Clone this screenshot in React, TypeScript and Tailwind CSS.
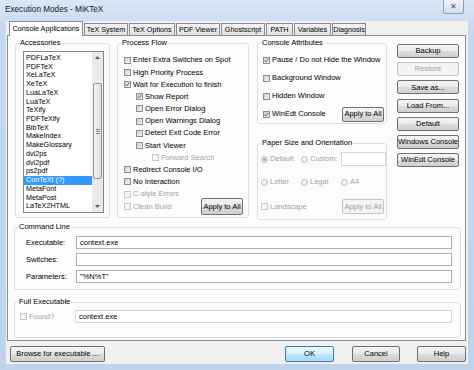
import clsx from 'clsx';

const accessories = [
  'PDFLaTeX',
  'PDFTeX',
  'XeLaTeX',
  'XeTeX',
  'LuaLaTeX',
  'LuaTeX',
  'TeXify',
  'PDFTeXify',
  'BibTeX',
  'MakeIndex',
  'MakeGlossary',
  'dvi2ps',
  'dvi2pdf',
  'ps2pdf',
  'ConTeXt (?)',
  'MetaFont',
  'MetaPost',
  'LaTeX2HTML',
  'TeX4ht',
];

const tabs = [
  { label: 'Console Applications', w: 'w-[74px]' },
  { label: 'TeX System', w: 'w-[44px]' },
  { label: 'TeX Options', w: 'w-[46px]' },
  { label: 'PDF Viewer', w: 'w-[44px]' },
  { label: 'Ghostscript', w: 'w-[44px]' },
  { label: 'PATH', w: 'w-[27px]' },
  { label: 'Variables', w: 'w-[37px]' },
  { label: 'Diagnosis', w: 'w-[34px]' },
];

const sideButtons = [
  { label: 'Backup' },
  { label: 'Restore', disabled: true },
  { label: 'Save as...' },
  { label: 'Load From...' },
  { label: 'Default' },
  { label: 'Windows Console' },
  { label: 'WinEdt Console' },
];

function Check({ checked, disabled }: { checked?: boolean; disabled?: boolean }) {
  return (
    <span
      className={clsx(
        'flex h-[7px] w-[7px] shrink-0 items-center justify-center border',
        disabled
          ? 'border-[#c8c8c8] bg-[#f6f6f6]'
          : 'border-[#8e8f8f] bg-[linear-gradient(135deg,#cfcfcf,#f4f4f4)]'
      )}
    >
      {checked && (
        <svg viewBox="0 0 8 8" className="h-[7px] w-[7px]">
          <path d="M1.3 4.2 L3.1 6.2 L6.8 1.3" stroke="#1f3a6a" strokeWidth="1.3" fill="none" />
        </svg>
      )}
    </span>
  );
}

function Radio({ selected }: { selected?: boolean }) {
  return (
    <span className="flex h-[7px] w-[7px] shrink-0 items-center justify-center rounded-full border border-[#b9b9b9] bg-[#f3f3f3]">
      {selected && <span className="h-[3px] w-[3px] rounded-full bg-[#a4a4a4]" />}
    </span>
  );
}

function CheckRow({
  label,
  checked,
  disabled,
  indent = '',
}: {
  label: string;
  checked?: boolean;
  disabled?: boolean;
  indent?: string;
}) {
  return (
    <div className={clsx('flex h-[12.2px] items-center gap-[2px] whitespace-nowrap', indent)}>
      <Check checked={checked} disabled={disabled} />
      <span className={disabled ? 'text-[#a3a3a3]' : 'text-black'}>{label}</span>
    </div>
  );
}

function Btn({
  label,
  disabled,
  className,
}: {
  label: string;
  disabled?: boolean;
  className?: string;
}) {
  return (
    <div
      className={clsx(
        'flex shrink-0 items-center justify-center whitespace-nowrap rounded-[2px] border text-[7.5px]',
        disabled
          ? 'border-[#c2c5c8] bg-[#f4f4f4] text-[#a0a0a0]'
          : 'border-[#707070] bg-[linear-gradient(#f3f3f3,#ebebeb_50%,#dcdcdc_50%,#cfcfcf)] text-black',
        className
      )}
    >
      {label}
    </div>
  );
}

function Group({
  title,
  className,
  children,
}: {
  title: string;
  className?: string;
  children: React.ReactNode;
}) {
  return (
    <fieldset className={clsx('shrink-0 rounded-[3px] border border-[#d5dfe5]', className)}>
      <legend className="ml-[3px] px-[1px] text-[7.5px] leading-[10px] text-black">{title}</legend>
      {children}
    </fieldset>
  );
}

function Field({ value, className }: { value?: string; className?: string }) {
  return (
    <div
      className={clsx(
        'flex h-[13px] items-center border border-[#abadb3] bg-white pl-[3px] text-[7.5px] text-black',
        className
      )}
    >
      {value}
    </div>
  );
}

export default function App() {
  return (
    <div className="flex h-[370px] w-[474px] flex-col bg-[linear-gradient(#d9e7f6,#c6d9ef_30px,#bfd3eb)] font-['Liberation_Sans',Arial,sans-serif] text-[7.5px] leading-none">
      {/* Title bar */}
      <div className="flex h-[21px] shrink-0 items-start">
        <span className="pl-[5px] pt-[6px] text-[8.2px] text-[#1a1a1a]">Execution Modes - MiKTeX</span>
        <div className="ml-auto mr-[10px] flex h-[14px] w-[21px] items-center justify-center rounded-b-[3px] border border-t-0 border-[#8d9fb6] bg-[linear-gradient(#eef3f9,#d3dfed)] text-[8px] text-[#4d5a6b]">
          ✕
        </div>
      </div>

      {/* Dialog body */}
      <div className="mx-[6px] flex h-[343px] w-[462px] flex-col bg-[#f0f0f0]">
        {/* Tabs */}
        <div className="flex h-[14px] shrink-0 items-end gap-[1px] pl-[3px]">
          {tabs.map((t, i) => (
            <div
              key={t.label}
              className={clsx(
                'flex items-center justify-center whitespace-nowrap border border-b-0 border-[#898c95] text-[7.2px] text-black',
                t.w,
                i === 0
                  ? 'relative z-10 -mb-[1px] h-[15px] bg-white'
                  : 'h-[12px] bg-[linear-gradient(#f3f3f3,#e2e2e2)]'
              )}
            >
              {t.label}
            </div>
          ))}
        </div>

        {/* Tab panel */}
        <div className="ml-[1px] h-[306px] w-[459px] shrink-0 border border-[#898c95] bg-[#fcfcfc]">
          <div className="flex items-start pl-[7px] pt-[2px]">
            {/* Accessories */}
            <Group title="Accessories" className="h-[180px] w-[95px]">
              <div className="ml-[7px] mt-[3px] flex h-[162px] w-[81px] border border-[#828790] bg-white">
                <div className="flex-1 overflow-hidden pt-[2px]">
                  {accessories.map((a) => (
                    <div
                      key={a}
                      className={clsx(
                        'h-[8.72px] whitespace-nowrap pl-[2px] text-[7.2px] leading-[8.72px]',
                        a === 'ConTeXt (?)' ? 'bg-[#3399ff] text-white' : 'text-black'
                      )}
                    >
                      {a}
                    </div>
                  ))}
                </div>
                <div className="flex w-[11px] flex-col bg-[#eaeaea]">
                  <div className="flex h-[11px] items-center justify-center">
                    <svg viewBox="0 0 7 4" className="h-[3px] w-[5px]">
                      <path d="M0 4 L3.5 0 L7 4 Z" fill="#5a5a5a" />
                    </svg>
                  </div>
                  <div className="flex-1">
                    <div className="mx-[1px] mt-[20px] flex h-[96px] items-center justify-center rounded-[2px] border border-[#979797] bg-[linear-gradient(90deg,#f4f4f4,#dcdcdc)]">
                      <div className="flex flex-col gap-[1px]">
                        <span className="h-[1px] w-[4px] bg-[#8a8a8a]" />
                        <span className="h-[1px] w-[4px] bg-[#8a8a8a]" />
                        <span className="h-[1px] w-[4px] bg-[#8a8a8a]" />
                      </div>
                    </div>
                  </div>
                  <div className="flex h-[11px] items-center justify-center">
                    <svg viewBox="0 0 7 4" className="h-[3px] w-[5px]">
                      <path d="M0 0 L3.5 4 L7 0 Z" fill="#5a5a5a" />
                    </svg>
                  </div>
                </div>
              </div>
            </Group>

            {/* Process Flow */}
            <Group title="Process Flow" className="ml-[7px] h-[180px] w-[132px]">
              <div className="mt-[6px] flex flex-col pl-[6px] pr-[5px]">
                <CheckRow label="Enter Extra Switches on Spot" />
                <CheckRow label="High Priority Process" />
                <CheckRow label="Wait for Execution to finish" checked />
                <CheckRow label="Show Report" checked indent="pl-[12px]" />
                <CheckRow label="Open Error Dialog" indent="pl-[12px]" />
                <CheckRow label="Open Warnings Dialog" indent="pl-[12px]" />
                <CheckRow label="Detect Exit Code Error" indent="pl-[12px]" />
                <CheckRow label="Start Viewer" indent="pl-[12px]" />
                <CheckRow label="Forward Search" disabled indent="pl-[28px]" />
                <CheckRow label="Redirect Console I/O" />
                <CheckRow label="No Interaction" />
                <CheckRow label="C-style Errors" disabled />
                <div className="flex h-[12.2px] items-center justify-between">
                  <div className="flex items-center gap-[2px]">
                    <Check disabled />
                    <span className="text-[#a3a3a3]">Clean Build</span>
                  </div>
                  <Btn label="Apply to All" className="-my-[3px] h-[17px] w-[42px]" />
                </div>
              </div>
            </Group>

            <div className="ml-[8px] flex w-[130px] flex-col">
              {/* Console Attributes */}
              <Group title="Console Attributes" className="h-[86px] w-[130px]">
                <div className="mt-[6px] flex flex-col gap-[6px] whitespace-nowrap pl-[5px] pr-[2px]">
                  <div className="flex h-[12px] items-center gap-[2px]">
                    <Check checked />
                    <span>Pause / Do not Hide the Window</span>
                  </div>
                  <div className="flex h-[12px] items-center gap-[2px]">
                    <Check />
                    <span>Background Window</span>
                  </div>
                  <div className="flex h-[12px] items-center gap-[2px]">
                    <Check />
                    <span>Hidden Window</span>
                  </div>
                  <div className="flex h-[12px] items-center justify-between">
                    <div className="flex items-center gap-[2px]">
                      <Check checked />
                      <span>WinEdt Console</span>
                    </div>
                    <Btn label="Apply to All" className="-my-[2px] h-[15px] w-[42px]" />
                  </div>
                </div>
              </Group>

              {/* Paper Size */}
              <Group title="Paper Size and Orientation" className="mt-[14px] h-[82px] w-[130px]">
                <div className="flex flex-col whitespace-nowrap pl-[3px] text-[#a3a3a3]">
                  <div className="mt-[4px] flex h-[14px] items-center">
                    <div className="flex w-[40px] items-center gap-[2px]">
                      <Radio selected />
                      <span>Default</span>
                    </div>
                    <div className="flex w-[40px] items-center gap-[2px]">
                      <Radio />
                      <span>Custom:</span>
                    </div>
                    <div className="h-[14px] w-[45px] border border-[#d4d6d9] bg-white" />
                  </div>
                  <div className="mt-[10px] flex h-[12px] items-center">
                    <div className="flex w-[40px] items-center gap-[2px]">
                      <Radio />
                      <span>Letter</span>
                    </div>
                    <div className="flex w-[40px] items-center gap-[2px]">
                      <Radio />
                      <span>Legal</span>
                    </div>
                    <div className="flex items-center gap-[2px]">
                      <Radio />
                      <span>A4</span>
                    </div>
                  </div>
                  <div className="mt-[11px] flex h-[15px] items-center justify-between pr-[2px]">
                    <div className="flex items-center gap-[2px]">
                      <Check disabled />
                      <span>Landscape</span>
                    </div>
                    <Btn label="Apply to All" disabled className="h-[15px] w-[42px]" />
                  </div>
                </div>
              </Group>
            </div>

            {/* Side buttons */}
            <div className="ml-[10px] flex w-[62px] flex-col gap-[4.2px] pt-[6px]">
              {sideButtons.map((b) => (
                <Btn key={b.label} label={b.label} disabled={b.disabled} className="h-[14px] w-[62px]" />
              ))}
            </div>
          </div>

          {/* Command Line */}
          <Group title="Command Line" className="ml-[6px] mt-[2px] h-[68px] w-[447px]">
            <div className="mt-[4px] flex flex-col gap-[4px] pl-[11px] pr-[8px]">
              <div className="flex items-center">
                <span className="w-[50px]">Executable:</span>
                <Field value="context.exe" className="flex-1" />
              </div>
              <div className="flex items-center">
                <span className="w-[50px]">Switches:</span>
                <Field className="flex-1" />
              </div>
              <div className="flex items-center">
                <span className="w-[50px]">Parameters:</span>
                <Field value={'"%N%T"'} className="flex-1" />
              </div>
            </div>
          </Group>

          {/* Full Executable */}
          <Group title="Full Executable" className="ml-[6px] mt-[7px] h-[41px] w-[447px]">
            <div className="mt-[3px] flex items-center pl-[5px] pr-[8px]">
              <div className="flex w-[55px] items-center gap-[2px]">
                <Check disabled />
                <span className="text-[#a3a3a3]">Found?</span>
              </div>
              <Field value="context.exe" className="flex-1 border-[#d4d6d9]" />
            </div>
          </Group>
        </div>

        {/* Bottom buttons */}
        <div className="mt-[5px] flex h-[16px] items-center pl-[4px] pr-[2px]">
          <Btn label="Browse for executable ..." className="h-[16px] w-[95px]" />
          <div className="ml-auto flex items-center">
            <div className="flex h-[16px] w-[49px] items-center justify-center rounded-[2px] border border-[#3c7fb1] bg-[linear-gradient(#eaf6fd,#d9f0fc_50%,#bee6fd_50%,#a7d9f5)] text-[7.5px] text-black">
              OK
            </div>
            <Btn label="Cancel" className="ml-[18px] h-[16px] w-[48px]" />
            <Btn label="Help" className="ml-[17px] h-[16px] w-[49px]" />
          </div>
        </div>
      </div>
    </div>
  );
}
